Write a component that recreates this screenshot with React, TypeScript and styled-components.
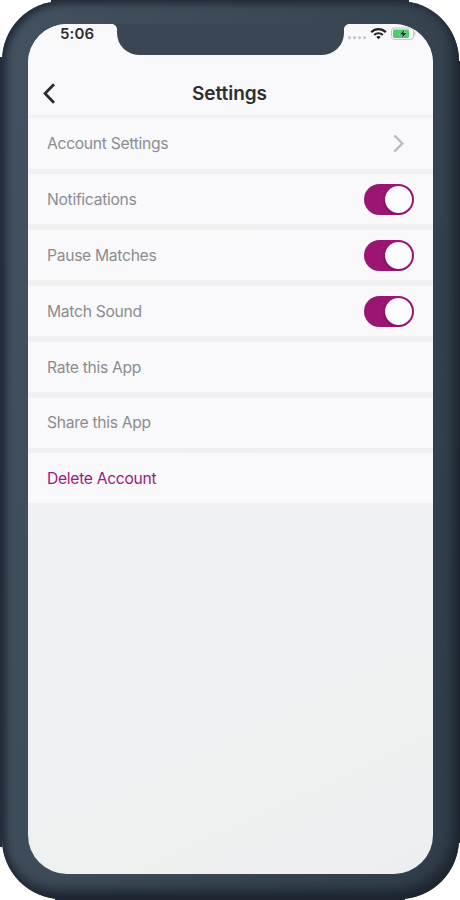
import React, { useState } from "react";
import styled, { createGlobalStyle } from "styled-components";

const Global = createGlobalStyle`
  * { box-sizing: border-box; }
  body { margin: 0; background: #fff; font-family: Inter, "Liberation Sans", sans-serif; }
`;

const Device = styled.div`
  position: relative;
  width: 460px;
  height: 900px;
  padding: 24px 27px 25px 28px;
  overflow: hidden;
  &::before {
    content: "";
    position: absolute;
    inset: 0;
    background:
      linear-gradient(#232c38, #232c38) 50% 0 / 358px 2px no-repeat,
      linear-gradient(#1f2530, #1f2530) 50% 100% / 350px 2px no-repeat,
      linear-gradient(#252b3a, #252b3a) 0 52% / 2px 790px no-repeat,
      linear-gradient(#1d232e, #1d232e) 100% 52% / 2px 782px no-repeat;
  }
`;

const Shell = styled.div`
  position: absolute;
  inset: 1px 1.5px;
  border-radius: 60px;
  background: linear-gradient(100deg, #435160 0%, #3b4855 45%, #303c49 100%);
  box-shadow:
    inset 4px 3px 6px 0 #242c39,
    inset -5px -8px 12px 1px #1d2530;
`;

const Screen = styled.main`
  position: relative;
  width: 405px;
  height: 850px;
  border-radius: 39px;
  overflow: hidden;
  background: linear-gradient(155deg, #f1f1f2 0%, #eff0f1 58%, #eff1f1 82%, #eceef0 100%);
`;

const Notch = styled.div`
  position: absolute;
  top: -1px;
  left: 89px;
  width: 227px;
  height: 32px;
  background: #3a4653;
  border-radius: 0 0 22px 22px;
  &::before, &::after {
    content: "";
    position: absolute;
    top: 1px;
    width: 5px;
    height: 5px;
  }
  &::before {
    left: -5px;
    background: radial-gradient(circle at 0 100%, transparent 4.5px, #3a4653 5.2px);
  }
  &::after {
    right: -5px;
    background: radial-gradient(circle at 100% 100%, transparent 4.5px, #3a4653 5.2px);
  }
`;

const StatusBar = styled.div`
  display: flex;
  justify-content: space-between;
  height: 44px;
  padding: 0 17px 0 32px;
  background: #f9f9fb;
`;

const Time = styled.span`
  height: 20px;
  font-size: 15px;
  line-height: 20px;
  font-weight: 600;
  letter-spacing: 0.15px;
  color: #2d2d30;
`;

const StatusIcons = styled.svg`
  display: block;
  width: 69px;
  height: 20px;
`;

const Header = styled.header`
  display: grid;
  grid-template-columns: 60px 1fr 60px;
  align-items: center;
  height: 47px;
  background: #f9f9fb;
`;

const BackButton = styled.button`
  display: flex;
  width: 40px;
  height: 40px;
  padding: 10px 0 0 13px;
  border: 0;
  background: none;
`;

const Title = styled.h1`
  margin: 4px 2px 0 0;
  text-align: center;
  font-size: 19px;
  line-height: 24px;
  font-weight: 600;
  letter-spacing: -0.05px;
  color: #2e2e31;
`;

const List = styled.div`
  display: flex;
  flex-direction: column;
  gap: 5.8px;
  padding-top: 3.2px;
`;

const Row = styled.div<{ $danger?: boolean }>`
  display: flex;
  align-items: center;
  justify-content: space-between;
  height: 50px;
  padding: 0 19px;
  background: #f9f9fb;
  color: ${({ $danger }) => ($danger ? "#9b1a76" : "#8c8c8f")};
  font-size: 15.7px;
  line-height: 20px;
  letter-spacing: -0.32px;
  &:first-child {
    height: 50.4px;
  }
`;

const Label = styled.span`
  margin-top: 1.7px;
`;

const Track = styled.button<{ $on: boolean }>`
  display: flex;
  justify-content: ${({ $on }) => ($on ? "flex-end" : "flex-start")};
  align-items: center;
  width: 50px;
  height: 31px;
  margin-top: 0.4px;
  padding: 0 2px;
  border: 0;
  border-radius: 16px;
  background: ${({ $on }) => ($on ? "#9b1573" : "#d5d5d8")};
`;

const Thumb = styled.span`
  width: 27px;
  height: 27px;
  border-radius: 50%;
  background: #fdfcfe;
  box-shadow: -1px 1px 2px rgba(70, 0, 50, 0.35);
`;

const Chevron = styled.svg`
  display: block;
  margin-right: 10px;
`;

function Toggle({ label }: { label: string }) {
  const [on, setOn] = useState(true);
  return (
    <Track $on={on} role="switch" aria-checked={on} aria-label={label} onClick={() => setOn(!on)}>
      <Thumb />
    </Track>
  );
}

type Item = { label: string; kind: "link" | "toggle" | "plain" | "danger" };

const items: Item[] = [
  { label: "Account Settings", kind: "link" },
  { label: "Notifications", kind: "toggle" },
  { label: "Pause Matches", kind: "toggle" },
  { label: "Match Sound", kind: "toggle" },
  { label: "Rate this App", kind: "plain" },
  { label: "Share this App", kind: "plain" },
  { label: "Delete Account", kind: "danger" },
];

export default function App() {
  return (
    <>
      <Global />
      <Device>
        <Shell />
        <Screen>
          <StatusBar>
            <Time>5:06</Time>
            <StatusIcons viewBox="0 0 69 20">
              <g fill="#c9c9cc">
                <circle cx="2.5" cy="13.7" r="1.6" />
                <circle cx="7.5" cy="13.7" r="1.6" />
                <circle cx="12.5" cy="13.7" r="1.6" />
                <circle cx="17.5" cy="13.7" r="1.6" />
              </g>
              <g fill="none" stroke="#252528" strokeWidth="2.2">
                <path d="M24.2 8.1a10.3 10.3 0 0 1 14.6 0" />
                <path d="M27.2 11a6.1 6.1 0 0 1 8.6 0" />
              </g>
              <path d="M31.5 15.3l-2.2-2.3a3.2 3.2 0 0 1 4.4 0z" fill="#252528" />
              <rect x="44.5" y="4" width="22" height="11.4" rx="2.8" fill="#fcfcfc" stroke="#b9c7be" />
              <rect x="46" y="5.5" width="16" height="8.5" rx="1.4" fill="#4fcb76" />
              <path d="M57.3 5.5l-4.5 5h3l-1 3.8 4.7-5.2h-3z" fill="#20352a" stroke="#c9f0d5" strokeWidth="0.7" paintOrder="stroke" />
              <path d="M67.8 7.8v3.8" stroke="#b9c7be" />
            </StatusIcons>
          </StatusBar>
          <Notch />
          <Header>
            <BackButton aria-label="Back">
              <svg width="16" height="22" viewBox="0 0 16 22" fill="none" stroke="#29292c" strokeWidth="2.7">
                <path d="M13 2.3L4 11.5l9 9.2" />
              </svg>
            </BackButton>
            <Title>Settings</Title>
          </Header>
          <List>
            {items.map(({ label, kind }) => (
              <Row key={label} $danger={kind === "danger"}>
                <Label>{label}</Label>
                {kind === "toggle" && <Toggle label={label} />}
                {kind === "link" && (
                  <Chevron width="11" height="19" viewBox="0 0 11 19" fill="none" stroke="#bcbcc0" strokeWidth="2.4">
                    <path d="M1.3 1.3l8 8.2-8 8.2" />
                  </Chevron>
                )}
              </Row>
            ))}
          </List>
        </Screen>
      </Device>
    </>
  );
}
